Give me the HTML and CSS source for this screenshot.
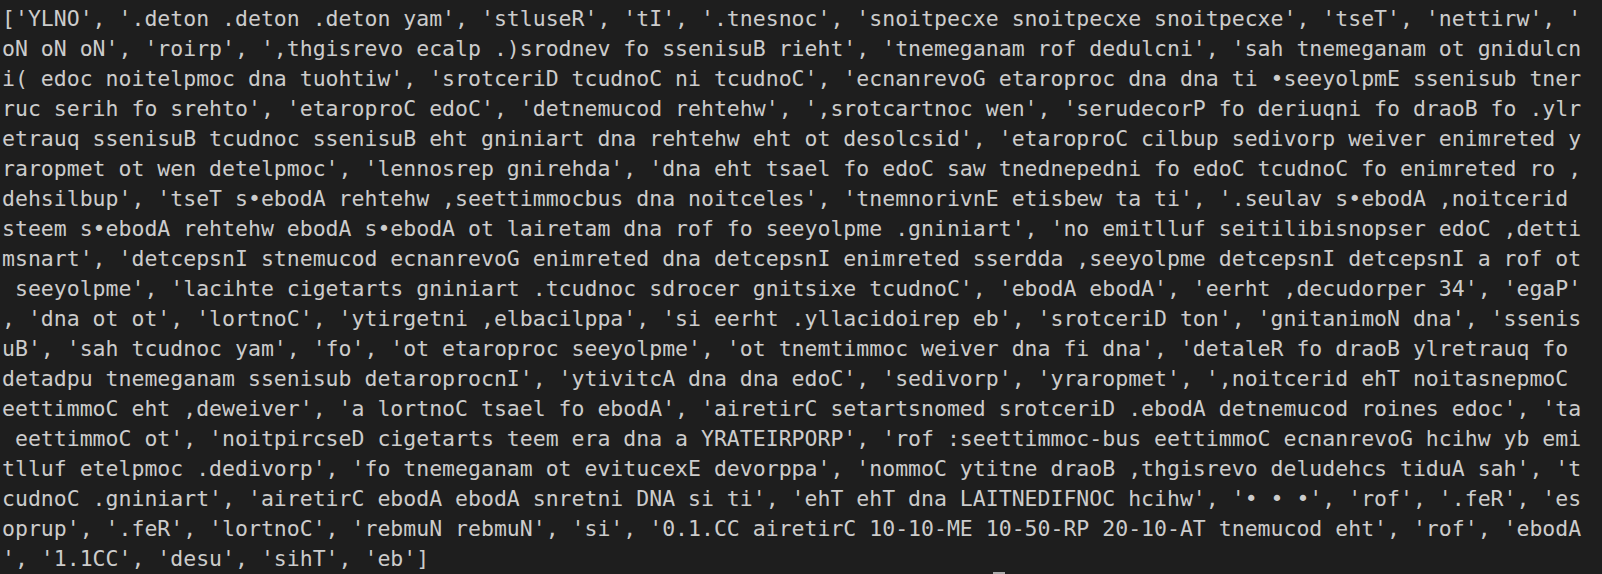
FILE: index.html
```html
<!DOCTYPE html>
<html lang="en">
<head>
<meta charset="utf-8">
<title>Terminal</title>
<link rel="stylesheet" href="styles.css">
</head>
<body>
<div class="terminal">
<div class="line">['YLNO', '.deton .deton .deton yam', 'stluseR', 'tI', '.tnesnoc', 'snoitpecxe snoitpecxe snoitpecxe', 'tseT', 'nettirw', '</div>
<div class="line">oN oN oN', 'roirp', ',thgisrevo ecalp .)srodnev fo ssenisuB rieht', 'tnemeganam rof dedulcni', 'sah tnemeganam ot gnidulcn</div>
<div class="line">i( edoc noitelpmoc dna tuohtiw', 'srotceriD tcudnoC ni tcudnoC', 'ecnanrevoG etaroproc dna dna ti •seeyolpmE ssenisub tner</div>
<div class="line">ruc serih fo srehto', 'etaroproC edoC', 'detnemucod rehtehw', ',srotcartnoc wen', 'serudecorP fo deriuqni fo draoB fo .ylr</div>
<div class="line">etrauq ssenisuB tcudnoc ssenisuB eht gniniart dna rehtehw eht ot desolcsid', 'etaroproC cilbup sedivorp weiver enimreted y</div>
<div class="line">raropmet ot wen detelpmoc', 'lennosrep gnirehda', 'dna eht tsael fo edoC saw tnednepedni fo edoC tcudnoC fo enimreted ro ,</div>
<div class="line">dehsilbup', 'tseT s•ebodA rehtehw ,seettimmocbus dna noitceles', 'tnemnorivnE etisbew ta ti', '.seulav s•ebodA ,noitcerid</div>
<div class="line">steem s•ebodA rehtehw ebodA s•ebodA ot lairetam dna rof fo seeyolpme .gniniart', 'no emitlluf seitilibisnopser edoC ,detti</div>
<div class="line">msnart', 'detcepsnI stnemucod ecnanrevoG enimreted dna detcepsnI enimreted sserdda ,seeyolpme detcepsnI detcepsnI a rof ot</div>
<div class="line"> seeyolpme', 'lacihte cigetarts gniniart .tcudnoc sdrocer gnitsixe tcudnoC', 'ebodA ebodA', 'eerht ,decudorper 34', 'egaP'</div>
<div class="line">, 'dna ot ot', 'lortnoC', 'ytirgetni ,elbacilppa', 'si eerht .yllacidoirep eb', 'srotceriD ton', 'gnitanimoN dna', 'ssenis</div>
<div class="line">uB', 'sah tcudnoc yam', 'fo', 'ot etaroproc seeyolpme', 'ot tnemtimmoc weiver dna fi dna', 'detaleR fo draoB ylretrauq fo</div>
<div class="line">detadpu tnemeganam ssenisub detaroprocnI', 'ytivitcA dna dna edoC', 'sedivorp', 'yraropmet', ',noitcerid ehT noitasnepmoC</div>
<div class="line">eettimmoC eht ,deweiver', 'a lortnoC tsael fo ebodA', 'airetirC setartsnomed srotceriD .ebodA detnemucod roines edoc', 'ta</div>
<div class="line"> eettimmoC ot', 'noitpircseD cigetarts teem era dna a YRATEIRPORP', 'rof :seettimmoc-bus eettimmoC ecnanrevoG hcihw yb emi</div>
<div class="line">tlluf etelpmoc .dedivorp', 'fo tnemeganam ot evitucexE devorppa', 'nommoC ytitne draoB ,thgisrevo deludehcs tiduA sah', 't</div>
<div class="line">cudnoC .gniniart', 'airetirC ebodA ebodA snretni DNA si ti', 'ehT ehT dna LAITNEDIFNOC hcihw', '• • •', 'rof', '.feR', 'es</div>
<div class="line">oprup', '.feR', 'lortnoC', 'rebmuN rebmuN', 'si', '0.1.CC airetirC 10-10-ME 10-50-RP 20-10-AT tnemucod eht', 'rof', 'ebodA</div>
<div class="line">', '1.1CC', 'desu', 'sihT', 'eb']</div>
</div>
<div class="cursor"></div>
</body>
</html>
```

FILE: styles.css
```css
html, body {
  margin: 0;
  padding: 0;
  background: #1e1e1e;
  overflow: hidden;
}

body {
  position: relative;
  height: 574px;
}

.terminal {
  display: flex;
  flex-direction: column;
  padding: 4px 0 0 2px;
  color: #cccccc;
  font-family: "DejaVu Sans Mono", "Liberation Mono", monospace;
  font-size: 21.5px;
  line-height: 30px;
}

.line {
  white-space: pre;
  height: 30px;
}

.cursor {
  position: absolute;
  left: 993px;
  top: 572px;
  width: 12px;
  height: 2px;
  background: #aaaaaa;
}
```
